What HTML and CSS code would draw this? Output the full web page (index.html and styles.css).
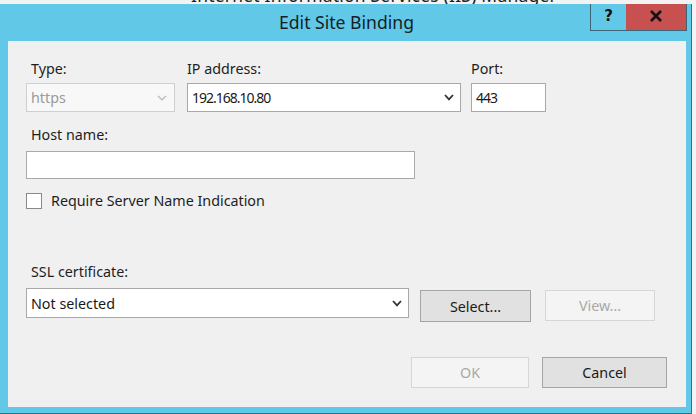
FILE: index.html
```html
<!DOCTYPE html>
<html>
<head>
<meta charset="utf-8">
<link rel="stylesheet" href="styles.css">
</head>
<body>
<div class="desk">
  <div class="bgtitle"><span>Internet Information Services (IIS) Manager</span></div>
  <div class="dialog">
    <div class="titlebar">
      <div class="title">Edit Site Binding</div>
      <div class="caption">
        <div class="cap-help">?</div>
        <div class="cap-close">
          <svg width="14" height="12" viewBox="0 0 14 12"><path d="M2 1 L12 11 M12 1 L2 11" stroke="#111" stroke-width="2.6" fill="none"/></svg>
        </div>
      </div>
    </div>
    <div class="client">
      <div class="row1">
        <div class="field f-type">
          <label class="lbl indent">Type:</label>
          <div class="combo disabled"><span>https</span>
            <svg class="chev" width="10" height="6" viewBox="0 0 10 6"><path d="M1 0.8 L5 5 L9 0.8" stroke="#b4b4b4" stroke-width="1.2" fill="none"/></svg>
          </div>
        </div>
        <div class="field f-ip">
          <label class="lbl">IP address:</label>
          <div class="combo"><span class="num">192.168.10.80</span>
            <svg class="chev" width="10" height="7" viewBox="0 0 10 7"><path d="M1 1 L5 5.4 L9 1" stroke="#333" stroke-width="1.8" fill="none"/></svg>
          </div>
        </div>
        <div class="field f-port">
          <label class="lbl">Port:</label>
          <div class="textbox port"><span class="num">443</span></div>
        </div>
      </div>
      <label class="lbl indent host-lbl">Host name:</label>
      <div class="textbox host"></div>
      <div class="check-row">
        <div class="checkbox"></div>
        <span class="check-lbl">Require Server Name Indication</span>
      </div>
      <label class="lbl indent ssl-lbl">SSL certificate:</label>
      <div class="ssl-row">
        <div class="combo ssl"><span>Not selected</span>
          <svg class="chev" width="10" height="7" viewBox="0 0 10 7"><path d="M1 1 L5 5.4 L9 1" stroke="#333" stroke-width="1.8" fill="none"/></svg>
        </div>
        <div class="btn btn-select">Select...</div>
        <div class="btn btn-view disabled">View...</div>
      </div>
      <div class="footer">
        <div class="btn btn-ok disabled">OK</div>
        <div class="btn btn-cancel">Cancel</div>
      </div>
    </div>
  </div>
</div>
</body>
</html>
```
FILE: styles.css
```css
* { box-sizing: border-box; }
html, body { margin: 0; padding: 0; }
body {
  width: 696px;
  height: 414px;
  overflow: hidden;
  background: #f3f3f3;
  font-family: "Noto Sans", "Open Sans", sans-serif;
  font-size: 14.3px;
  color: #1e1e1e;
}
.desk { width: 696px; height: 414px; overflow: hidden; }
.bgtitle {
  height: 4px;
  overflow: hidden;
  text-align: center;
  width: 696px;
  padding-left: 52px;
}
.bgtitle span {
  display: block;
  font-size: 17.5px;
  line-height: 18px;
  margin-top: -14px;
  color: #222;
  letter-spacing: 0.2px;
  white-space: nowrap;
}
.dialog {
  width: 692px;
  height: 410px;
  background: #62c8e8;
  border-right: 1px solid #3b6e80;
  border-bottom: 1px solid #3b6e80;
  display: flex;
  flex-direction: column;
}
.titlebar {
  height: 37px;
  display: grid;
  grid-template-columns: 1fr auto 1fr;
}
.title {
  grid-column: 2;
  font-size: 17.6px;
  line-height: 37px;
  color: #141e24;
  padding-left: 2px;
}
.caption {
  grid-column: 3;
  justify-self: end;
  align-self: start;
  display: flex;
  margin-right: 4px;
  height: 27px;
  border: 1px solid #3b6474;
  border-top: none;
}
.cap-help {
  width: 35px;
  height: 26px;
  text-align: center;
  font-weight: bold;
  font-size: 15px;
  line-height: 24px;
  color: #111;
  font-family: "DejaVu Sans", sans-serif;
}
.cap-close {
  width: 60px;
  height: 26px;
  background: #c75050;
  display: flex;
  align-items: center;
  justify-content: center;
  padding-bottom: 3px;
}
.client {
  margin-left: 8px;
  width: 678px;
  height: 366px;
  background: #f0f0f0;
  padding: 20px 0 0 18px;
  display: flex;
  flex-direction: column;
}
.lbl {
  display: block;
  line-height: 16px;
  height: 16px;
  color: #1e1e1e;
  white-space: nowrap;
}
.lbl.indent { padding-left: 5px; }
.row1 { display: flex; }
.field { display: flex; flex-direction: column; }
.field .lbl { margin-bottom: 6px; }
.f-type { width: 149px; margin-right: 12px; }
.f-ip { width: 274px; margin-right: 10px; }
.f-port { width: 75px; }
.combo, .textbox {
  height: 29px;
  background: #fff;
  border: 1px solid #a9a9a9;
  display: flex;
  align-items: center;
  padding-left: 4px;
  color: #1a1a1a;
}
.combo span, .textbox span { flex: 1; }
.num { font-size: 14px; letter-spacing: -1px; }
.combo .chev { margin-right: 6px; }
.combo.disabled {
  background: #f8f8f8;
  border-color: #cfcfcf;
  color: #9a9a9a;
}
.combo.disabled .chev { margin-right: 7px; }
.host-lbl { margin-top: 15px; }
.textbox.host { margin-top: 8px; width: 389px; height: 28px; }
.check-row {
  margin-top: 14px;
  display: flex;
  align-items: center;
  height: 16px;
}
.checkbox {
  width: 16px;
  height: 16px;
  border: 1px solid #8a8a8a;
  background: #fff;
  margin-right: 9px;
}
.check-lbl { line-height: 16px; white-space: nowrap; }
.ssl-lbl { margin-top: 55px; }
.ssl-row {
  margin-top: 8px;
  display: flex;
  align-items: flex-start;
}
.combo.ssl { width: 383px; height: 30px; }
.btn {
  display: flex;
  align-items: center;
  justify-content: center;
  background: #e1e1e1;
  border: 1px solid #a5a5a5;
  color: #1a1a1a;
}
.btn.disabled {
  background: #f4f4f4;
  border-color: #d6d6d6;
  color: #a8a8a8;
}
.btn-select { width: 111px; height: 32px; margin: 2px 0 0 11px; }
.btn-view { width: 110px; height: 31px; margin: 2px 0 0 14px; }
.footer {
  margin-top: 35px;
  display: flex;
  justify-content: flex-end;
  padding-right: 19px;
}
.btn-ok { width: 118px; height: 31px; margin-right: 13px; }
.btn-cancel { width: 125px; height: 31px; }
```
